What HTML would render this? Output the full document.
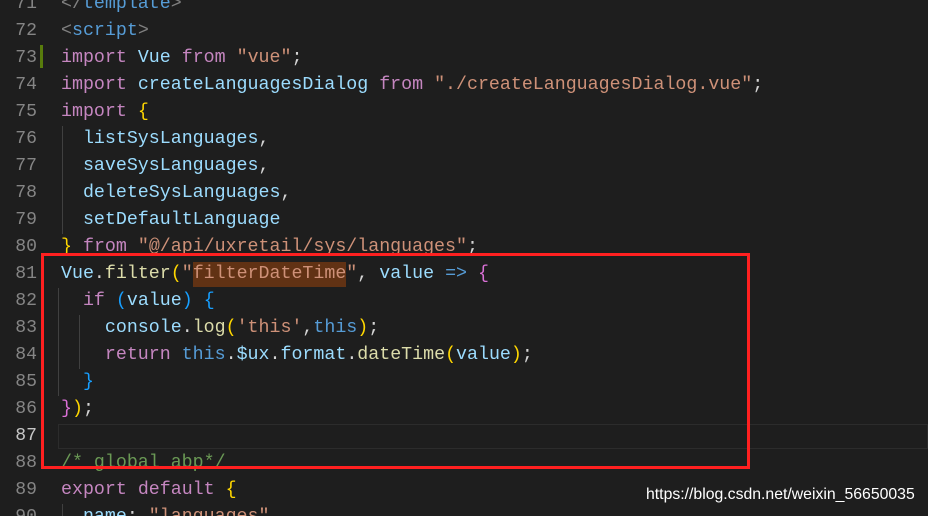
<!DOCTYPE html>
<html><head><meta charset="utf-8"><style>
html,body{margin:0;padding:0;background:#1e1e1e;width:928px;height:516px;overflow:hidden;position:relative}
.l{position:absolute;left:0;height:27px;line-height:27px;font-family:"Liberation Mono",monospace;font-size:18.3px;white-space:pre;width:928px}
.n{position:absolute;left:0;width:37px;text-align:right;color:#858585;font-size:18.1px}
.c{position:absolute;left:61px;color:#d4d4d4}
.k{color:#c586c0}.v{color:#9cdcfe}.s{color:#ce9178}.t{color:#808080}.tg{color:#569cd6}.f{color:#dcdcaa}.y{color:#ffd700}.p{color:#da70d6}.b{color:#179fff}.cm{color:#6a9955}.th{color:#569cd6}
.g{position:absolute;width:1px;background:#404040}
.hl{background:#613214;display:inline-block;line-height:25px;height:25px;vertical-align:top;margin-top:1px}
</style></head><body>
<div style="position:absolute;left:58px;top:424px;width:870px;height:25px;border:1px solid #2c2c2c;box-sizing:border-box"></div>
<div style="position:absolute;left:40px;top:45px;width:3px;height:23px;background:#587c0c"></div>
<div class="g" style="left:62px;top:126px;height:108px"></div>
<div class="g" style="left:58px;top:288px;height:108px"></div>
<div class="g" style="left:79px;top:315px;height:54px"></div>
<div class="g" style="left:62px;top:504px;height:27px"></div>

<div class="l" style="top:-9px"><span class="n">71</span><span class="c"><span class="t">&lt;/</span><span class="tg">template</span><span class="t">&gt;</span></span></div>
<div class="l" style="top:18px"><span class="n">72</span><span class="c"><span class="t">&lt;</span><span class="tg">script</span><span class="t">&gt;</span></span></div>
<div class="l" style="top:45px"><span class="n">73</span><span class="c"><span class="k">import</span> <span class="v">Vue</span> <span class="k">from</span> <span class="s">"vue"</span>;</span></div>
<div class="l" style="top:72px"><span class="n">74</span><span class="c"><span class="k">import</span> <span class="v">createLanguagesDialog</span> <span class="k">from</span> <span class="s">"./createLanguagesDialog.vue"</span>;</span></div>
<div class="l" style="top:99px"><span class="n">75</span><span class="c"><span class="k">import</span> <span class="y">{</span></span></div>
<div class="l" style="top:126px"><span class="n">76</span><span class="c">  <span class="v">listSysLanguages</span>,</span></div>
<div class="l" style="top:153px"><span class="n">77</span><span class="c">  <span class="v">saveSysLanguages</span>,</span></div>
<div class="l" style="top:180px"><span class="n">78</span><span class="c">  <span class="v">deleteSysLanguages</span>,</span></div>
<div class="l" style="top:207px"><span class="n">79</span><span class="c">  <span class="v">setDefaultLanguage</span></span></div>
<div class="l" style="top:234px"><span class="n">80</span><span class="c"><span class="y">}</span> <span class="k">from</span> <span class="s">"@/api/uxretail/sys/languages"</span>;</span></div>
<div class="l" style="top:261px"><span class="n">81</span><span class="c"><span class="v">Vue</span>.<span class="f">filter</span><span class="y">(</span><span class="s">"<span class="hl">filterDateTime</span>"</span>, <span class="v">value</span> <span class="tg">=&gt;</span> <span class="p">{</span></span></div>
<div class="l" style="top:288px"><span class="n">82</span><span class="c">  <span class="k">if</span> <span class="b">(</span><span class="v">value</span><span class="b">)</span> <span class="b">{</span></span></div>
<div class="l" style="top:315px"><span class="n">83</span><span class="c">    <span class="v">console</span>.<span class="f">log</span><span class="y">(</span><span class="s">'this'</span>,<span class="th">this</span><span class="y">)</span>;</span></div>
<div class="l" style="top:342px"><span class="n">84</span><span class="c">    <span class="k">return</span> <span class="th">this</span>.<span class="v">$ux</span>.<span class="v">format</span>.<span class="f">dateTime</span><span class="y">(</span><span class="v">value</span><span class="y">)</span>;</span></div>
<div class="l" style="top:369px"><span class="n">85</span><span class="c">  <span class="b">}</span></span></div>
<div class="l" style="top:396px"><span class="n">86</span><span class="c"><span class="p">}</span><span class="y">)</span>;</span></div>
<div class="l" style="top:423px"><span class="n" style="color:#c6c6c6">87</span><span class="c"></span></div>
<div class="l" style="top:450px"><span class="n">88</span><span class="c"><span class="cm">/* global abp*/</span></span></div>
<div class="l" style="top:477px"><span class="n">89</span><span class="c"><span class="k">export</span> <span class="k">default</span> <span class="y">{</span></span></div>
<div class="l" style="top:504px"><span class="n">90</span><span class="c">  <span class="v">name</span>: <span class="s">"languages"</span>,</span></div>

<div style="position:absolute;left:41px;top:253px;width:709px;height:216px;border:3px solid #ff2020;box-sizing:border-box"></div>
<div style="position:absolute;left:646px;top:486px;font-family:'Liberation Sans',sans-serif;font-size:15.8px;color:#fff;white-space:nowrap">https://blog.csdn.net/weixin_56650035</div>
</body></html>
